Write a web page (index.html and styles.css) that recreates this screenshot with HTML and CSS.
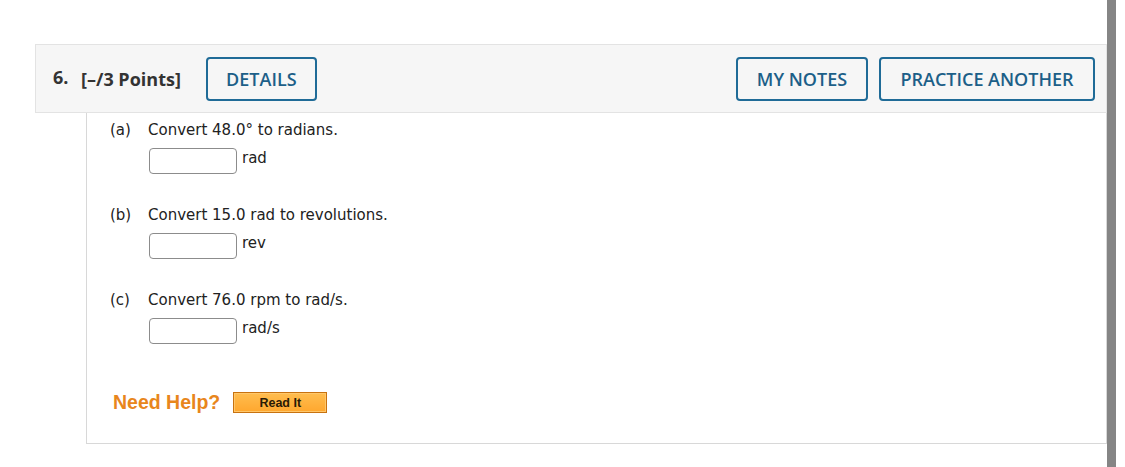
FILE: index.html
```html
<!DOCTYPE html>
<html>
<head>
<meta charset="utf-8">
<link rel="stylesheet" href="styles.css">
</head>
<body>
<div class="page">
  <div class="main">
    <div class="q-header">
      <span class="q-num">6.</span>
      <span class="q-points">[–/3 Points]</span>
      <button class="hbtn btn-details">DETAILS</button>
      <div class="spacer"></div>
      <button class="hbtn btn-notes">MY NOTES</button>
      <button class="hbtn btn-practice">PRACTICE ANOTHER</button>
    </div>
    <div class="q-body">
      <div class="part">
        <span class="plabel">(a)</span>
        <div class="pcontent">
          <div class="ptext">Convert 48.0° to radians.</div>
          <div class="answer"><span class="ibox"></span><span class="unit">rad</span></div>
        </div>
      </div>
      <div class="part">
        <span class="plabel">(b)</span>
        <div class="pcontent">
          <div class="ptext">Convert 15.0 rad to revolutions.</div>
          <div class="answer"><span class="ibox"></span><span class="unit">rev</span></div>
        </div>
      </div>
      <div class="part">
        <span class="plabel">(c)</span>
        <div class="pcontent">
          <div class="ptext">Convert 76.0 rpm to rad/s.</div>
          <div class="answer"><span class="ibox"></span><span class="unit">rad/s</span></div>
        </div>
      </div>
      <div class="help">
        <span class="help-text">Need Help?</span>
        <span class="read-it">Read It</span>
      </div>
    </div>
  </div>
  <div class="sidebar"></div>
</div>
</body>
</html>
```
FILE: styles.css
```css
html, body {
  margin: 0;
  padding: 0;
  background: #fff;
}
.page {
  display: flex;
  width: 1125px;
  height: 467px;
  overflow: hidden;
}
.main {
  width: 1072px;
  padding: 44px 0 0 35px;
}
.sidebar {
  width: 9px;
  height: 467px;
  background: #858585;
}
.q-header {
  display: flex;
  align-items: center;
  height: 67px;
  border: 1px solid #e3e3e3;
  background: #f6f6f6;
  padding: 0 11px 0 17px;
  font-family: "Open Sans", sans-serif;
}
.q-num {
  font-weight: 700;
  font-size: 18px;
  color: #333;
  margin-top: -4px;
  width: 28px;
}
.q-points {
  font-weight: 700;
  font-size: 18px;
  color: #333;
  margin-right: 25px;
}
.spacer { flex: 1; }
.hbtn {
  box-sizing: border-box;
  height: 44px;
  border: 2px solid #1f6b97;
  border-radius: 4px;
  background: transparent;
  color: #1c5f88;
  font-family: "Open Sans", sans-serif;
  font-weight: 600;
  font-size: 18px;
  padding: 0;
}
.btn-details { width: 111px; }
.btn-notes { width: 132px; margin-right: 11px; }
.btn-practice { width: 216px; }
.q-body {
  margin-left: 51px;
  border: 1px solid #d8d8d8;
  border-top: none;
  height: 331px;
  box-sizing: border-box;
  padding: 8px 0 0 23px;
  font-family: "DejaVu Sans", Verdana, sans-serif;
  font-size: 15px;
  color: #222;
}
.part {
  display: flex;
  margin-bottom: 32px;
}
.plabel {
  width: 38px;
  line-height: 18px;
}
.ptext {
  line-height: 18px;
  margin-bottom: 9px;
}
.answer {
  display: flex;
  align-items: center;
}
.ibox {
  display: inline-block;
  box-sizing: border-box;
  width: 88px;
  height: 26px;
  margin-left: 1px;
  border: 1px solid #8c8c8c;
  border-radius: 4px;
  background: #fff;
}
.unit {
  margin-left: 5px;
  margin-top: -6px;
}
.help {
  display: flex;
  align-items: center;
  margin-top: 47px;
  margin-left: 3px;
}
.help-text {
  font-family: "Liberation Sans", Arial, sans-serif;
  font-weight: 700;
  font-size: 19.5px;
  color: #e8861c;
  margin-right: 13px;
}
.read-it {
  box-sizing: border-box;
  width: 94px;
  height: 21px;
  display: flex;
  align-items: center;
  justify-content: center;
  border: 1px solid #c8720f;
  box-shadow: inset 0 0 0 1px #ffc76a;
  background: linear-gradient(#ffbd4f, #ffa72e);
  font-family: "Liberation Sans", Arial, sans-serif;
  font-weight: 700;
  font-size: 12.5px;
  color: #2a1a05;
}
```
